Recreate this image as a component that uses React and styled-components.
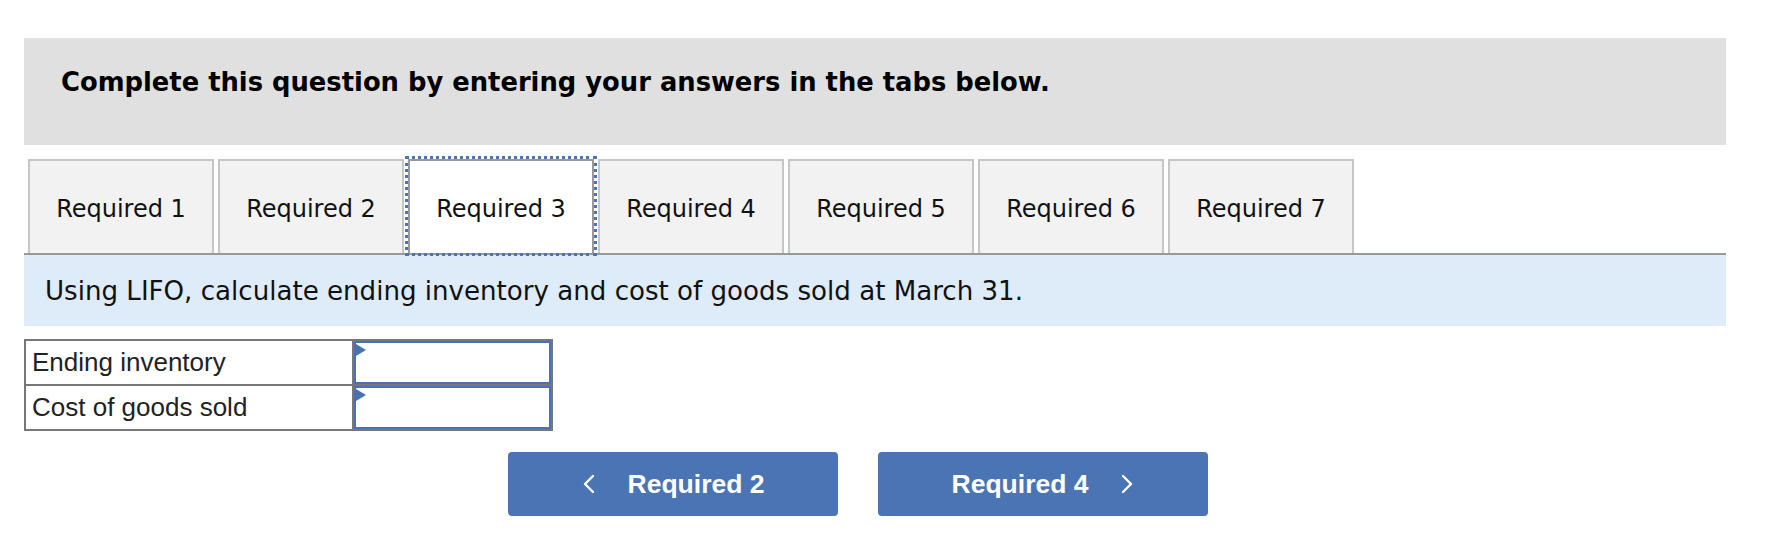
import React from 'react';
import styled, { createGlobalStyle } from 'styled-components';

const GlobalStyle = createGlobalStyle`
	body {
		margin: 0;
		background: #fff;
		font-family: "DejaVu Sans", Verdana, sans-serif;
	}
`;

const Page = styled.div`
	width: 1702px;
	padding: 38px 0 0 24px;
`;

const Banner = styled.div`
	height: 107px;
	box-sizing: border-box;
	padding: 29px 37px 0;
	background-color: #e0e0e0;
	font-family: "DejaVu Sans", Verdana, sans-serif;
	font-weight: bold;
	font-size: 25.8px;
	line-height: 1.2;
	color: #000;
`;

const TabList = styled.div`
	display: flex;
	gap: 4px;
	margin-top: 14px;
	padding-left: 4px;
	height: 94px;
`;

const Tab = styled.button`
	width: 186px;
	height: 94px;
	box-sizing: border-box;
	border: 2px solid ${(p) => (p.$active ? '#999' : '#c6c6c6')};
	border-bottom: none;
	background-color: ${(p) => (p.$active ? '#fff' : '#f2f2f2')};
	font-family: "DejaVu Sans", Verdana, sans-serif;
	font-size: 24px;
	color: #111;
	padding: 4px 0 0;
	cursor: pointer;
	position: relative;
	z-index: ${(p) => (p.$active ? 1 : 0)};
	outline: ${(p) => (p.$active ? '3px dotted #4a74b4' : 'none')};
	outline-offset: 0;
`;

const Instruction = styled.div`
	height: 71px;
	border-top: 2px solid #999;
	background-color: #deebf8;
	display: flex;
	align-items: center;
	padding-left: 21px;
	font-family: "DejaVu Sans", Verdana, sans-serif;
	font-size: 26.1px;
	color: #111;
`;

const AnswerGrid = styled.div`
	display: grid;
	grid-template-columns: 326px 197px;
	grid-auto-rows: 43px;
	gap: 2px;
	width: max-content;
	margin-top: 13px;
	border: 2px solid #777;
	background-color: #777;
`;

const Label = styled.div`
	background-color: #fff;
	display: flex;
	align-items: center;
	padding-left: 6px;
	font-family: "Liberation Sans", Arial, sans-serif;
	font-size: 26px;
	color: #222;
`;

const InputBox = styled.div`
	background-color: #fff;
	border: 2px solid #4a72b2;
	position: relative;

	&::before {
		content: '';
		position: absolute;
		top: 1px;
		left: 0;
		border-left: 10px solid #4a72b2;
		border-top: 6px solid transparent;
		border-bottom: 6px solid transparent;
	}
`;

const NavRow = styled.div`
	display: flex;
	gap: 40px;
	margin-top: 21px;
	padding-left: 484px;
`;

const NavButton = styled.button`
	width: 330px;
	height: 64px;
	border: none;
	border-radius: 4px;
	background-color: #4a74b4;
	color: #fff;
	font-family: "Liberation Sans", Arial, sans-serif;
	font-weight: bold;
	font-size: 26.5px;
	display: flex;
	align-items: center;
	justify-content: center;
	gap: 33px;
	cursor: pointer;
	padding: 0;
`;

const Chevron = ({ dir }) => (
	<svg width="13" height="22" viewBox="0 0 13 22" fill="none">
		<polyline
			points={dir === 'left' ? '11,3 3,11 11,19' : '2,3 10,11 2,19'}
			stroke="#fff"
			strokeWidth="2.4"
			strokeLinecap="round"
			strokeLinejoin="round"
		/>
	</svg>
);

const tabs = [1, 2, 3, 4, 5, 6, 7];

const App = () => {
	return (
		<Page>
			<GlobalStyle />
			<Banner>Complete this question by entering your answers in the tabs below.</Banner>

			<TabList>
				{tabs.map((n) => (
					<Tab key={n} $active={n === 3}>
						Required {n}
					</Tab>
				))}
			</TabList>

			<Instruction>
				Using LIFO, calculate ending inventory and cost of goods sold at March 31.
			</Instruction>

			<AnswerGrid>
				<Label>Ending inventory</Label>
				<InputBox />
				<Label>Cost of goods sold</Label>
				<InputBox />
			</AnswerGrid>

			<NavRow>
				<NavButton>
					<Chevron dir="left" />
					<span>Required 2</span>
				</NavButton>
				<NavButton>
					<span>Required 4</span>
					<Chevron dir="right" />
				</NavButton>
			</NavRow>
		</Page>
	);
};

export default App;
